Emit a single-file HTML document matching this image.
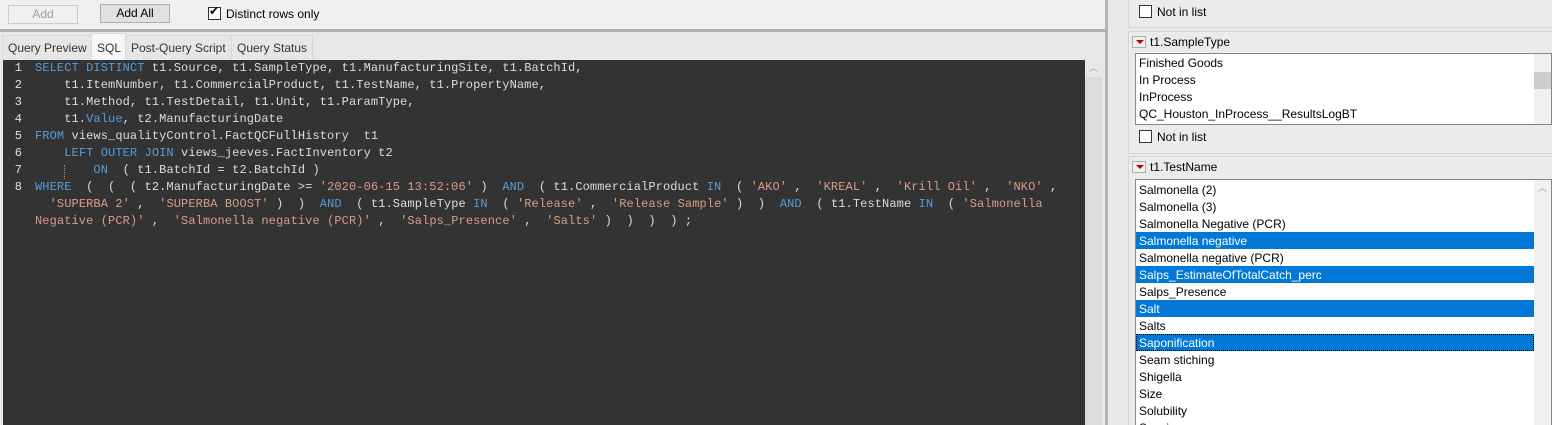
<!DOCTYPE html>
<html><head><meta charset="utf-8"><style>
*{margin:0;padding:0;box-sizing:border-box}
html{width:1552px;height:425px;overflow:hidden}
body{width:1552px;height:425px;overflow:hidden;background:#f0f0f0;font-family:"Liberation Sans",sans-serif;font-size:12px;color:#000;position:relative}
.a{position:absolute}
.btn{position:absolute;height:19px;border:1px solid #adadad;background:#e1e1e1;text-align:center;line-height:17px;font-size:12px}
.tab{position:absolute;top:35px;height:24px;border:1px solid #d9d9d9;border-bottom:none;background:#e6e6e6;line-height:24px;padding:0 5px;color:#333}
.ed{position:absolute;left:3px;top:60px;width:1082px;height:365px;background:#333333;font-family:"Liberation Mono",monospace;font-size:12px;color:#dcdcdc;white-space:pre;letter-spacing:0.1px}
.ln{position:absolute;left:0;width:19px;text-align:right;color:#e0e0e0;top:1px}
.cl{position:absolute;left:32px}
.k{color:#569cd6}.s{color:#d69d85}
.grp{position:absolute;left:1128px;width:424px;border:1px solid #d6d6d6;border-right:none;background:#ebebeb}
.cb{position:absolute;width:13px;height:13px;border:1px solid #333;background:#fff}
.lst{position:absolute;left:1135px;width:417px;background:#fff;border:1px solid #828790;overflow:hidden}
.it{height:17px;line-height:19px;padding-left:3px;font-size:12px;white-space:nowrap}
.sel{background:#0078d7;color:#fff}
.dd{position:absolute;left:1132px;width:14px;height:12px;border:1px solid #adadad;background:#f0f0f0}
.dd:after{content:"";position:absolute;left:3px;top:3px;border-left:4px solid transparent;border-right:4px solid transparent;border-top:4px solid #c00000}
</style></head><body>
<div class="btn" style="left:8px;top:5px;width:70px;color:#a0a0a0;background:#f0f0f0;border-color:#ccc">Add</div>
<div class="btn" style="left:100px;top:4px;width:70px;">Add All</div>
<div class="cb" style="left:208px;top:7px;"></div>
<div class="a" style="left:209px;top:4px;font-size:12px">✔</div>
<div class="a" style="left:226px;top:7px">Distinct rows only</div>
<div class="a" style="left:0;top:29px;width:1105px;height:3px;background:#b0b0b0"></div>
<div class="a" style="left:0;top:32px;width:1105px;height:393px;background:#e8e8e8"></div>
<div class="tab" style="left:2px">Query Preview</div>
<div class="tab" style="left:91px;top:33px;height:27px;background:#f7f7f7;line-height:28px">SQL</div>
<div class="tab" style="left:125px">Post-Query Script</div>
<div class="tab" style="left:231px">Query Status</div>
<div class="ed">
<div style="position:absolute;left:0;top:1px;width:100%;height:100%">
<div class="ln" style="top:0">1</div><div class="cl" style="top:0"><span class="k">SELECT DISTINCT</span> t1.Source, t1.SampleType, t1.ManufacturingSite, t1.BatchId,</div>
<div class="ln" style="top:17px">2</div><div class="cl" style="top:17px">    t1.ItemNumber, t1.CommercialProduct, t1.TestName, t1.PropertyName,</div>
<div class="ln" style="top:34px">3</div><div class="cl" style="top:34px">    t1.Method, t1.TestDetail, t1.Unit, t1.ParamType,</div>
<div class="ln" style="top:51px">4</div><div class="cl" style="top:51px">    t1.<span class="k">Value</span>, t2.ManufacturingDate</div>
<div class="ln" style="top:68px">5</div><div class="cl" style="top:68px"><span class="k">FROM</span> views_qualityControl.FactQCFullHistory  t1</div>
<div class="ln" style="top:85px">6</div><div class="cl" style="top:85px">    <span class="k">LEFT OUTER JOIN</span> views_jeeves.FactInventory t2</div>
<div class="ln" style="top:102px">7</div><div class="cl" style="top:102px">        <span class="k">ON</span>  ( t1.BatchId = t2.BatchId )</div>
<div class="a" style="left:61px;top:104px;height:14px;border-left:1px dotted #888"></div>
<div class="ln" style="top:119px">8</div><div class="cl" style="top:119px"><span class="k">WHERE</span>  (  (  ( t2.ManufacturingDate &gt;= <span class="s">'2020-06-15 13:52:06'</span> )  <span class="k">AND</span>  ( t1.CommercialProduct <span class="k">IN</span>  ( <span class="s">'AKO'</span> ,  <span class="s">'KREAL'</span> ,  <span class="s">'Krill Oil'</span> ,  <span class="s">'NKO'</span> ,</div>
<div class="cl" style="top:136px">  <span class="s">'SUPERBA 2'</span> ,  <span class="s">'SUPERBA BOOST'</span> )  )  <span class="k">AND</span>  ( t1.SampleType <span class="k">IN</span>  ( <span class="s">'Release'</span> ,  <span class="s">'Release Sample'</span> )  )  <span class="k">AND</span>  ( t1.TestName <span class="k">IN</span>  ( <span class="s">'Salmonella</span></div>
<div class="cl" style="top:153px"><span class="s">Negative (PCR)'</span> ,  <span class="s">'Salmonella negative (PCR)'</span> ,  <span class="s">'Salps_Presence'</span> ,  <span class="s">'Salts'</span> )  )  )  ) ;</div>
</div>
</div>
<div class="a" style="left:1085px;top:60px;width:17px;height:365px;background:#dcdcdc"></div>
<div class="a" style="left:1085px;top:60px;width:17px;height:17px;background:#e8e8e8;color:#999;font-size:9px;text-align:center;line-height:17px">︿</div>
<div class="a" style="left:1105px;top:0;width:3px;height:425px;background:#b4b4b4"></div>
<div class="a" style="left:1108px;top:0;width:444px;height:425px;background:#e9e9e9"></div>
<div class="grp" style="top:-2px;height:30px"></div>
<div class="cb" style="left:1139px;top:5px"></div>
<div class="a" style="left:1157px;top:5px">Not in list</div>
<div class="grp" style="top:31px;height:123px"></div>
<div class="dd" style="top:36px"></div>
<div class="a" style="left:1150px;top:35px">t1.SampleType</div>
<div class="lst" style="top:53px;height:72px">
<div class="it">Finished Goods</div><div class="it">In Process</div><div class="it">InProcess</div><div class="it">QC_Houston_InProcess__ResultsLogBT</div>
<div class="a" style="right:0;top:0;width:17px;height:70px;background:#f0f0f0"></div>
<div class="a" style="right:0;top:18px;width:17px;height:17px;background:#cdcdcd"></div>
</div>
<div class="cb" style="left:1139px;top:130px"></div>
<div class="a" style="left:1157px;top:130px">Not in list</div>
<div class="grp" style="top:156px;height:270px"></div>
<div class="dd" style="top:161px"></div>
<div class="a" style="left:1150px;top:160px">t1.TestName</div>
<div class="lst" style="top:179px;height:250px">
<div style="height:1px"></div>
<div class="it">Salmonella (2)</div><div class="it">Salmonella (3)</div><div class="it">Salmonella Negative (PCR)</div>
<div class="it sel" style="margin-right:17px">Salmonella negative</div>
<div class="it">Salmonella negative (PCR)</div>
<div class="it sel" style="margin-right:17px">Salps_EstimateOfTotalCatch_perc</div>
<div class="it">Salps_Presence</div>
<div class="it sel" style="margin-right:17px">Salt</div>
<div class="it">Salts</div>
<div class="it sel" style="margin-right:17px;outline:1px dotted #000;outline-offset:-1px">Saponification</div>
<div class="it">Seam stiching</div><div class="it">Shigella</div><div class="it">Size</div><div class="it">Solubility</div><div class="it">Species</div>
<div class="a" style="right:0;top:0;width:17px;height:250px;background:#f0f0f0;color:#999;font-size:9px;text-align:center;line-height:17px">︿</div>
</div>
</body></html>
